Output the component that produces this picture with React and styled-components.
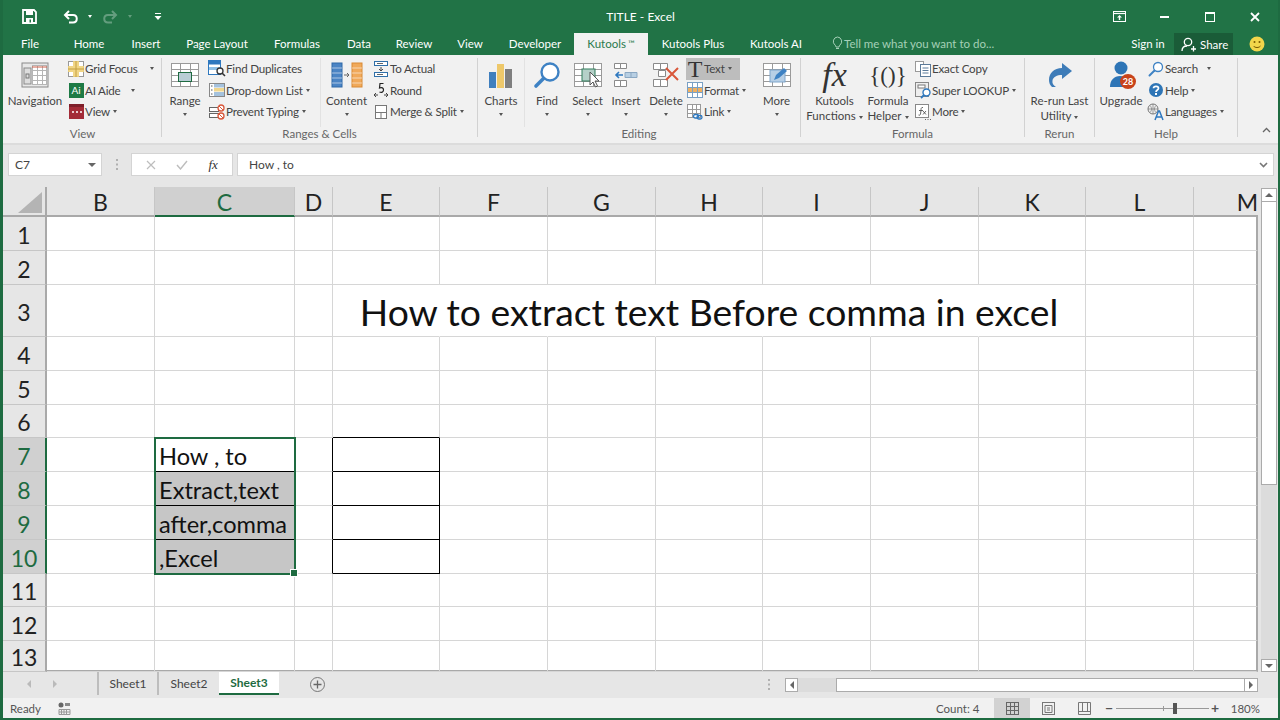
import React from 'react';
import styled, { createGlobalStyle } from 'styled-components';

const GlobalStyle = createGlobalStyle`
  html, body { margin: 0; padding: 0; width: 1280px; height: 720px; overflow: hidden; background: #217346; }
  body { font-family: Lato, "Open Sans", sans-serif; }
  #root { width: 1280px; height: 720px; }
  * { box-sizing: border-box; }
`;

const Window = styled.div`
  width: 1280px;
  height: 720px;
  display: flex;
  flex-direction: column;
  border-left: 3px solid #1e6b41;
  border-right: 2px solid #1e6b41;
  border-bottom: 2px solid #1e6b41;
  background: #e6e6e6;
  overflow: hidden;
`;

/* ---------- title bar + tabs ---------- */
const TitleBar = styled.div`
  height: 33px;
  margin-left: -3px;
  margin-right: -2px;
  padding-right: 3px;
  background: #217346;
  display: flex;
  align-items: center;
  color: #fff;
`;
const QuickBtn = styled.div`
  width: ${(p) => p.$w}px;
  display: flex;
  justify-content: center;
  align-items: center;
  opacity: ${(p) => (p.$faint ? 0.3 : 1)};
`;
const TitleText = styled.div`
  flex: 1;
  text-align: center;
  font-size: 12px;
  margin-left: 4px;
`;
const WinBtn = styled.div`
  width: 45px;
  display: flex;
  justify-content: center;
  align-items: center;
`;
const TabStrip = styled.div`
  height: 22px;
  margin-left: -3px;
  margin-right: -2px;
  background: #217346;
  display: flex;
  align-items: stretch;
  color: #fff;
  font-size: 11.5px;
`;
const Tab = styled.div`
  width: ${(p) => p.$w}px;
  display: flex;
  align-items: center;
  justify-content: center;
  padding-bottom: 2px;
  white-space: nowrap;
  ${(p) => p.$active && 'background:#f1f1f1;'}
  color: ${(p) => (p.$active ? '#2a7a4d' : '#fff')};
  sup { font-size: 9px; margin-left: 2px; line-height: 1; }
`;
const TellMe = styled.div`
  flex: 1;
  display: flex;
  align-items: center;
  gap: 1px;
  padding: 0 0 2px 18px;
  color: #a5d0b7;
`;
const SignIn = styled.div`
  width: 60px;
  display: flex;
  align-items: center;
  justify-content: center;
  padding: 0 0 2px 8px;
`;
const ShareBtn = styled.div`
  width: 59px;
  display: flex;
  align-items: center;
  gap: 3px;
  padding-left: 7px;
  background: #1a5c38;
`;
const Smiley = styled.div`
  width: 47px;
  display: flex;
  align-items: center;
  justify-content: center;
`;

/* ---------- ribbon ---------- */
const Ribbon = styled.div`
  height: 90px;
  background: #f1f1f1;
  border-bottom: 2px solid #dcdcdc;
  display: flex;
  color: #444;
  font-size: 11.5px;
  padding-left: 1px;
  position: relative;
`;
const Group = styled.div`
  width: ${(p) => p.$w}px;
  margin-top: 3px;
  margin-bottom: 6px;
  border-right: 1px solid #d2d2d2;
  display: flex;
  flex-direction: column;
`;
const GroupBody = styled.div`
  flex: 1;
  display: flex;
`;
const GroupLabel = styled.div`
  height: 10px;
  text-align: center;
  line-height: 14px;
  font-size: 11.5px;
  color: #666;
`;
const BigBtn = styled.div`
  width: ${(p) => p.$w}px;
  display: flex;
  flex-direction: column;
  align-items: center;
  line-height: 15px;
  text-align: center;
  white-space: nowrap;
  ${(p) => p.$sep && 'border-right:1px solid #e2e2e2;'}
`;
const BigIcon = styled.div`
  height: 35px;
  padding-bottom: 1px;
  display: flex;
  align-items: center;
  justify-content: center;
`;
const SmallCol = styled.div`
  width: ${(p) => p.$w}px;
  padding-left: ${(p) => p.$left || 0}px;
  ${(p) => p.$sep && 'border-right:1px solid #e2e2e2;'}
`;
const SmallRow = styled.div`
  height: 21.6px;
  display: flex;
  align-items: center;
  white-space: nowrap;
  font-size: 11.6px;
  letter-spacing: -0.2px;
  width: ${(p) => (p.$active ? '54px' : 'auto')};
  background: ${(p) => (p.$active ? '#bdbdbd' : 'transparent')};
`;
const SmallIcon = styled.div`
  width: 18px;
  height: 18px;
  display: flex;
  align-items: center;
  justify-content: center;
  flex: none;
`;
const Caret = styled.span`
  display: inline-block;
  width: 0;
  height: 0;
  border-left: 2.5px solid transparent;
  border-right: 2.5px solid transparent;
  border-top: 3px solid #555;
  margin-left: ${(p) => p.$gap ?? 3}px;
  vertical-align: middle;
`;
const BigCaret = styled(Caret)`
  margin: 5px 0 0;
`;
const CollapseBtn = styled.div`
  position: absolute;
  right: 7px;
  bottom: 8px;
`;
const AiBadge = styled.div`
  width: 15px;
  height: 15px;
  background: #1d7a45;
  color: #fff;
  font-size: 10px;
  line-height: 15px;
  text-align: center;
`;
const SerifGlyph = styled.span`
  font-family: "Liberation Serif", serif;
  font-size: ${(p) => p.$size}px;
  font-style: ${(p) => (p.$italic ? 'italic' : 'normal')};
  color: #333;
  line-height: 1;
  white-space: nowrap;
`;
const UpgradeBadge = styled.div`
  position: absolute;
  right: -3px;
  bottom: 0;
  width: 16px;
  height: 15px;
  border-radius: 50%;
  background: #c8431a;
  color: #fff;
  font-size: 9px;
  font-weight: 700;
  line-height: 15px;
  text-align: center;
`;
const UpgradeWrap = styled.div`
  position: relative;
  width: 24px;
  height: 28px;
`;

/* ---------- formula bar ---------- */
const FormulaBar = styled.div`
  height: 42px;
  display: flex;
  align-items: flex-start;
  padding: 8px 4px 0 5px;
  background: #e6e6e6;
  font-size: 12px;
  color: #444;
`;
const NameBox = styled.div`
  width: 94px;
  height: 23px;
  background: #fff;
  border: 1px solid #d4d4d4;
  display: flex;
  align-items: center;
  justify-content: space-between;
  padding: 0 5px 0 6px;
`;
const Dots = styled.div`
  width: 29px;
  height: 23px;
  display: flex;
  align-items: center;
  justify-content: center;
`;
const FxBox = styled.div`
  width: 102px;
  height: 23px;
  background: #fff;
  border: 1px solid #d4d4d4;
  display: flex;
  align-items: center;
  justify-content: space-around;
  padding: 0 4px;
`;
const FormulaInput = styled.div`
  flex: 1;
  height: 23px;
  margin-left: 4px;
  background: #fff;
  border: 1px solid #d4d4d4;
  display: flex;
  align-items: center;
  justify-content: space-between;
  padding: 0 5px 0 11px;
`;

/* ---------- sheet ---------- */
const Workspace = styled.div`
  height: 485px;
  display: flex;
`;
const Sheet = styled.div`
  width: 1255px;
  display: grid;
  grid-template-columns: 44px 108px 140px 38px 107px 108px 108px 107px 108px 108px 107px 108px 64px;
  grid-template-rows: 30px 34px 34px 52px 34px 34px 33px 34px 34px 34px 34px 33px 34px 31px;
  background: #fff;
  border-bottom: 2px solid #a9a9a9;
`;
const Corner = styled.div`
  background: #e6e6e6;
  border-bottom: 2px solid #a9a9a9;
  border-right: 2px solid #a9a9a9;
  display: flex;
  align-items: flex-end;
  justify-content: flex-end;
  padding: 0 3px 2px 0;
`;
const ColHead = styled.div`
  background: ${(p) => (p.$active ? '#d0d0d0' : '#e6e6e6')};
  color: ${(p) => (p.$active ? '#1e6b41' : '#222')};
  border-right: 1px solid #c6c6c6;
  border-bottom: 2px solid ${(p) => (p.$active ? '#1e6b41' : '#a9a9a9')};
  display: flex;
  align-items: center;
  justify-content: center;
  font-size: 23px;
  padding-top: 1px;
  ${(p) => p.$last && 'border-right:none;justify-content:flex-end;border-bottom-color:#a9a9a9;'}
`;
const RowHead = styled.div`
  grid-column: 1;
  grid-row: ${(p) => p.$r + 1};
  background: ${(p) => (p.$active ? '#d0d0d0' : '#e6e6e6')};
  color: ${(p) => (p.$active ? '#1e6b41' : '#222')};
  border-right: 2px solid ${(p) => (p.$active ? '#1e6b41' : '#a9a9a9')};
  border-bottom: 1px solid #c6c6c6;
  display: flex;
  align-items: center;
  justify-content: center;
  padding-top: 2px;
  font-size: 23px;
`;
const Cell = styled.div`
  grid-column: ${(p) => p.$c + 2};
  grid-row: ${(p) => p.$r + 1};
  background: ${(p) => (p.$fill ? '#c6c6c6' : 'transparent')};
  border-right: 1px solid ${(p) => (p.$hideRight ? 'transparent' : p.$blackRight ? '#000' : '#d6d6d6')};
  border-bottom: 1px solid ${(p) => (p.$blackBottom ? '#000' : '#d6d6d6')};
  display: flex;
  align-items: center;
  padding: 2px 0 0 4px;
  font-size: 23.6px;
  color: #111;
  white-space: nowrap;
  min-width: 0;
  ${(p) => p.$lastCol && 'border-right:2px solid #a9a9a9;'}
`;
const TitleCell = styled(Cell)`
  justify-content: center;
  padding: 2px 0 0;
  font-size: 37.3px;
`;
const Selection = styled.div`
  grid-column: 3;
  grid-row: 8 / 12;
  margin: -1px;
  border: 2px solid #1e6b41;
  position: relative;
  pointer-events: none;
  &::after {
    content: '';
    position: absolute;
    right: -4px;
    bottom: -4px;
    width: 6px;
    height: 6px;
    background: #1e6b41;
    border: 1px solid #fff;
  }
`;
const VScroll = styled.div`
  flex: 1;
  display: flex;
  flex-direction: column;
  padding: 1px 1px 0 3px;
  background: #e6e6e6;
`;
const ScrollBtn = styled.div`
  height: ${(p) => p.$h || 13}px;
  width: ${(p) => p.$w || 'auto'};
  flex: none;
  background: #fff;
  border: 1px solid #ababab;
  display: flex;
  align-items: center;
  justify-content: center;
`;
const VThumb = styled.div`
  height: 283px;
  background: #fff;
  border: 1px solid #ababab;
  border-top: none;
`;
const VTrack = styled.div`
  flex: 1;
  background: #dcdcdc;
`;
const Tri = styled.span`
  width: 0;
  height: 0;
  ${(p) => p.$dir === 'up' && 'border-left:4px solid transparent;border-right:4px solid transparent;border-bottom:4px solid #666;'}
  ${(p) => p.$dir === 'down' && 'border-left:4px solid transparent;border-right:4px solid transparent;border-top:4px solid #666;'}
  ${(p) => p.$dir === 'left' && 'border-top:4px solid transparent;border-bottom:4px solid transparent;border-right:4px solid #666;'}
  ${(p) => p.$dir === 'right' && 'border-top:4px solid transparent;border-bottom:4px solid transparent;border-left:4px solid #666;'}
  opacity: ${(p) => (p.$faint ? 0.35 : 1)};
`;

/* ---------- sheet tabs ---------- */
const SheetBar = styled.div`
  height: 26px;
  display: flex;
  align-items: flex-start;
  background: #e6e6e6;
  font-size: 12px;
  color: #444;
`;
const SheetNav = styled.div`
  width: 94px;
  height: 23px;
  display: flex;
  align-items: center;
  gap: 22px;
  padding-left: 24px;
`;
const SheetTab = styled.div`
  width: ${(p) => p.$w}px;
  height: 23px;
  display: flex;
  align-items: center;
  justify-content: center;
  border-left: ${(p) => (p.$active ? 'none' : '2px solid #bdbdbd')};
  background: ${(p) => (p.$active ? '#fff' : 'transparent')};
  color: ${(p) => (p.$active ? '#1e6b41' : '#444')};
  font-weight: ${(p) => (p.$active ? 700 : 400)};
  ${(p) => p.$active && 'border-bottom:2px solid #1e6b41;'}
`;
const AddSheet = styled.div`
  width: 76px;
  height: 25px;
  display: flex;
  align-items: center;
  justify-content: center;
`;
const SplitDots = styled.div`
  flex: 1;
  height: 25px;
  display: flex;
  align-items: center;
  justify-content: flex-end;
  padding-right: 15px;
`;
const HScroll = styled.div`
  width: 473px;
  height: 14px;
  margin: 6px 20px 0 0;
  display: flex;
`;
const HTrack = styled.div`
  width: 38px;
  background: #dcdcdc;
`;
const HThumb = styled.div`
  flex: 1;
  background: #fff;
  border: 1px solid #ababab;
  border-right: none;
`;

/* ---------- status bar ---------- */
const StatusBar = styled.div`
  height: 20px;
  background: #f1f1f1;
  display: flex;
  align-items: center;
  font-size: 11.5px;
  color: #555;
  padding-left: 7px;
`;
const StatusText = styled.span`
  width: ${(p) => p.$w}px;
  flex: none;
`;
const StatusFill = styled.div`
  flex: 1;
`;
const ViewBtn = styled.div`
  width: 36px;
  height: 20px;
  display: flex;
  align-items: center;
  justify-content: center;
  background: ${(p) => (p.$active ? '#d2d2d2' : 'transparent')};
`;
const ZoomBar = styled.div`
  width: 124px;
  display: flex;
  align-items: center;
  justify-content: space-between;
  padding: 0 7px 0 3px;
  color: #555;
  font-weight: 700;
  font-size: 14px;
  line-height: 1;
`;
const ZoomTrack = styled.div`
  width: 93px;
  height: 1px;
  background: #999;
  position: relative;
`;
const ZoomThumb = styled.div`
  position: absolute;
  left: 57px;
  top: -5px;
  width: 4px;
  height: 11px;
  background: #555;
`;
const ZoomTick = styled.div`
  position: absolute;
  left: 47px;
  top: -2px;
  width: 1px;
  height: 5px;
  background: #999;
`;
const ZoomPct = styled.span`
  width: 34px;
  text-align: right;
  margin-right: 18px;
`;

/* ---------- icons ---------- */
const Svg = ({ s = 16, h, vb, children, ...rest }) => (
  <svg width={s} height={h || s} viewBox={vb || `0 0 ${s} ${h || s}`} fill="none" {...rest}>{children}</svg>
);

const TableLines = ({ x, y, w, h, cols, rows, stroke = '#9a9a9a' }) => (
  <g stroke={stroke} strokeWidth="1">
    <rect x={x + 0.5} y={y + 0.5} width={w - 1} height={h - 1} fill="#fff" />
    {Array.from({ length: cols - 1 }, (_, i) => {
      const lx = Math.round(x + (w * (i + 1)) / cols) + 0.5;
      return <line key={i} x1={lx} x2={lx} y1={y} y2={y + h} />;
    })}
    {Array.from({ length: rows - 1 }, (_, i) => {
      const ly = Math.round(y + (h * (i + 1)) / rows) + 0.5;
      return <line key={i} x1={x} x2={x + w} y1={ly} y2={ly} />;
    })}
  </g>
);

const NavIcon = () => (
  <Svg s={28} h={26}>
    <rect x="1" y="1" width="26" height="24" fill="#e8e8e8" stroke="#8a8a8a" />
    <TableLines x={11} y={3} w={15} h={20} cols={3} rows={4} stroke="#b5b5b5" />
    <line x1="11" x2="26" y1="5" y2="5" stroke="#d0604a" />
    <rect x="3" y="6" width="7" height="16" fill="#ddd" stroke="#8a8a8a" />
    <rect x="5" y="12" width="3" height="4" stroke="#777" />
  </Svg>
);
const RangeIcon = () => (
  <Svg s={28} h={25}>
    <TableLines x={0} y={0} w={28} h={24} cols={3} rows={4} />
    <rect x="7.5" y="9.5" width="13" height="9" fill="#b9cdd5" stroke="#1e6b41" />
  </Svg>
);
const ContentIcon = () => (
  <Svg s={32} h={26}>
    <rect x="1" y="1" width="10" height="24" fill="#4b84c4" stroke="#2e68a8" />
    <rect x="21" y="1" width="10" height="24" fill="#f0a95a" stroke="#d98a35" />
    <g stroke="#fff" strokeOpacity=".55"><path d="M1 6h10M1 11h10M1 16h10M1 21h10M21 6h10M21 11h10M21 16h10M21 21h10" /></g>
    <path d="M13 13h5m-2-2 2 2-2 2" stroke="#666" />
  </Svg>
);
const ChartsIcon = () => (
  <Svg s={24} h={25}>
    <rect x="0" y="9" width="7" height="16" fill="#3f7fbe" />
    <rect x="8" y="1" width="7" height="24" fill="#eec86a" />
    <rect x="16" y="6" width="7" height="19" fill="#7f7f7f" />
  </Svg>
);
const FindIcon = () => (
  <Svg s={28} h={28}>
    <circle cx="17" cy="11" r="8.5" stroke="#3e82c4" strokeWidth="2.4" fill="#fff" />
    <path d="M10.5 17.5 3 25" stroke="#3e82c4" strokeWidth="3.6" strokeLinecap="round" />
  </Svg>
);
const SelectIcon = () => (
  <Svg s={28} h={26}>
    <TableLines x={0} y={1} w={28} h={24} cols={3} rows={4} />
    <rect x="8" y="7" width="13" height="12" fill="#b5d0c8" stroke="#2f7d5b" />
    <path d="M16 10v13l3-3 2.5 5 2-1-2.5-5h4z" fill="#fff" stroke="#555" />
  </Svg>
);
const InsertIcon = () => (
  <Svg s={26} h={26}>
    <g stroke="#8a8a8a" fill="#fff">
      <path d="M1.5 1.5h6v5h-6zM7.5 1.5h6v5h-6zM1.5 18.5h6v6h-6zM7.5 18.5h6v6h-6z" />
    </g>
    <path d="M12 10.5h12v5H12z" fill="#b8cfe3" stroke="#8aa7c2" />
    <path d="M18 10.5v5" stroke="#8aa7c2" />
    <path d="M10 13H3m3-3-3 3 3 3" stroke="#2e78bf" strokeWidth="1.6" />
  </Svg>
);
const DeleteIcon = () => (
  <Svg s={28} h={26}>
    <g stroke="#8a8a8a" fill="#fff">
      <path d="M1.5 1.5h7v6h-7zM8.5 1.5h7v6h-7zM6.5 8.5h7v6h-7zM1.5 17.5h7v7h-7zM8.5 17.5h7v7h-7z" />
    </g>
    <path d="M14 6l12 12M26 6 14 18" stroke="#d9573a" strokeWidth="2" />
  </Svg>
);
const MoreIcon = () => (
  <Svg s={28} h={25}>
    <TableLines x={0} y={0} w={28} h={24} cols={3} rows={4} />
    <rect x="7" y="7" width="15" height="12" fill="#b7cfe6" stroke="#7ea6cc" />
    <path d="M11 17l2-5 8-7 3 3-8 7z" fill="#3e82c4" />
  </Svg>
);
const RerunIcon = () => (
  <Svg s={26} h={26}>
    <path d="M25 9 15 1v5C7 6 2 11 2 18c0 3 1 5 3 7h4c-3-2-4-4-3.500-6.500C6 15 10 13 15 13v4z" fill="#3e7cb8" />
  </Svg>
);
const PersonIcon = () => (
  <Svg s={22} h={26}>
    <circle cx="11" cy="7" r="6.5" fill="#2e75b6" />
    <path d="M0 26c0-7 4-11 10-11 3 0 5 1 6 2v9z" fill="#2e75b6" />
  </Svg>
);

const GridFocusIcon = () => (
  <Svg s={16}>
    <rect x=".5" y=".5" width="15" height="15" fill="#fff" stroke="#999" />
    <path d="M5 0h6v16H5zM0 5h16v6H0z" fill="#f0d27a" opacity=".9" />
    <path d="M8 0v16M0 8h16" stroke="#c4a040" />
  </Svg>
);
const ViewSmallIcon = () => (
  <Svg s={15}>
    <rect width="15" height="15" fill="#a32b37" />
    <rect y="0" width="15" height="3" fill="#7e1f2a" />
    <path d="M3 8h2M7 8h2M11 8h2" stroke="#fff" strokeWidth="1.500" />
  </Svg>
);
const FindDupIcon = () => (
  <Svg s={18}>
    <rect x=".5" y=".5" width="12" height="14" fill="#fff" stroke="#2e78bf" />
    <rect x=".5" y=".5" width="12" height="4" fill="#2e78bf" />
    <rect x="1" y="7" width="11" height="3" fill="#8fc0e6" />
    <circle cx="12" cy="11" r="3" fill="#fff" stroke="#333" strokeWidth="1.300" />
    <path d="m14 13 3 3" stroke="#333" strokeWidth="1.600" />
  </Svg>
);
const DropListIcon = () => (
  <Svg s={16}>
    <rect x=".5" y="1.500" width="15" height="13" fill="#fff" stroke="#888" />
    <rect x="5" y="2" width="10" height="3.500" fill="#a5c2dd" />
    <rect x="5" y="6" width="10" height="3.500" fill="#efd68e" />
    <rect x="5" y="10" width="10" height="4" fill="#a5c2dd" />
    <path d="M2 4h1.500M2 8h1.500M2 12h1.500" stroke="#555" />
  </Svg>
);
const PreventIcon = () => (
  <Svg s={16}>
    <rect x=".5" y="3.500" width="9" height="4" fill="#fff" stroke="#666" />
    <rect x=".5" y="9.500" width="9" height="4" fill="#fff" stroke="#666" />
    <circle cx="12" cy="4" r="3" fill="#fff" stroke="#d9573a" strokeWidth="1.300" />
    <circle cx="12" cy="12" r="3" fill="#fff" stroke="#d9573a" strokeWidth="1.300" />
    <path d="m10 2 4 4M10 10l4 4" stroke="#d9573a" />
  </Svg>
);
const ToActualIcon = () => (
  <Svg s={16}>
    <rect x="1.500" y=".5" width="13" height="4" fill="#fff" stroke="#2f6fa8" />
    <rect x="1.500" y="11.500" width="13" height="4" fill="#fff" stroke="#2f6fa8" />
    <path d="M4 2.500h6M4 13.500h6" stroke="#666" />
    <path d="M8 6v3m-2-1 2 2 2-2" stroke="#444" />
  </Svg>
);
const RoundIcon = () => (
  <Svg s={16}>
    <path d="M1 13h4m-2-2-2 2 2 2M11 13h4m-2-2 2 2-2 2" stroke="#444" />
    <path d="M10.500 1.500H7L6.500 6c2.500-1 4 0 4 2s-2 3-4 2" stroke="#222" strokeWidth="1.200" />
  </Svg>
);
const MergeIcon = () => (
  <Svg s={16}>
    <rect x="2.500" y="1.500" width="11" height="13" fill="#fff" stroke="#777" />
    <path d="M2 8.500h12M8 9v6" stroke="#777" />
  </Svg>
);
const FormatIcon = () => (
  <Svg s={16}>
    <rect x=".5" y=".5" width="15" height="15" fill="#fff" stroke="#7aa0c4" />
    <rect x="1" y="6" width="14" height="4" fill="#f0b060" />
    <path d="M0 5.500h16M0 10.500h16M5.500 0v16M10.500 0v16" stroke="#7aa0c4" />
  </Svg>
);
const LinkIcon = () => (
  <Svg s={16}>
    <TableLines x={0} y={0} w={14} h={14} cols={3} rows={3} />
    <rect x="6.500" y="10.500" width="5" height="3.500" rx="1.700" stroke="#2e78bf" strokeWidth="1.300" fill="#fff" />
    <rect x="10" y="11.500" width="5" height="3.500" rx="1.700" stroke="#2e78bf" strokeWidth="1.300" />
  </Svg>
);
const ExactCopyIcon = () => (
  <Svg s={16}>
    <rect x=".5" y=".5" width="8" height="10" fill="#fff" stroke="#9a9a9a" />
    <rect x="5.500" y="3.500" width="10" height="12" fill="#fff" stroke="#5b7a99" />
    <path d="M7.500 7h6M7.500 9.500h6M7.500 12h6" stroke="#5b7a99" />
  </Svg>
);
const LookupIcon = () => (
  <Svg s={17}>
    <rect x=".5" y=".5" width="13" height="14" fill="#eee" stroke="#888" />
    <rect x="3" y="3" width="7" height="3" fill="#fff" stroke="#777" />
    <circle cx="11.500" cy="10.500" r="3.500" fill="#fff" stroke="#2e78bf" strokeWidth="1.400" />
    <path d="m9 13-3 3" stroke="#2e78bf" strokeWidth="1.800" />
  </Svg>
);
const SearchSmallIcon = () => (
  <Svg s={16}>
    <circle cx="10" cy="6" r="4.500" fill="#fff" stroke="#3e82c4" strokeWidth="1.300" />
    <path d="m6.500 9.500-5 5" stroke="#3e82c4" strokeWidth="2" strokeLinecap="round" />
  </Svg>
);
const HelpIcon = () => (
  <Svg s={16}>
    <circle cx="8" cy="8" r="7" fill="#2e75b6" />
    <path d="M5.500 6.200C5.700 3.800 10.500 3.800 10.500 6.300 10.500 8 8 8 8 10" stroke="#fff" strokeWidth="1.700" />
    <rect x="7" y="11" width="2" height="2" fill="#fff" />
  </Svg>
);
const LangIcon = () => (
  <Svg s={18}>
    <circle cx="6" cy="6" r="5" stroke="#777" />
    <path d="M1 6h10M6 1v10M3 2.500c2 2 2 5 0 7M9 2.500c-2 2-2 5 0 7" stroke="#777" strokeWidth=".7" />
    <path d="M8 17l3.500-9h1l3.500 9m-6.500-3h5" stroke="#2e78bf" strokeWidth="1.500" />
  </Svg>
);
const MoreFxIcon = () => (
  <Svg s={16}>
    <rect x=".5" y=".5" width="13" height="13" fill="#fff" stroke="#888" />
    <path d="M8 3.500C6 3 6 5 6 6.500L5.500 10C5 11.500 4 11.500 3.500 11M4 6.500h4M8 7l3 3.500M11 7l-3 3.500" stroke="#444" strokeWidth=".8" />
    <path d="M10 15.500h1M12.500 15.500h1M15 15.500h1" stroke="#666" />
  </Svg>
);

const SaveIcon = () => (
  <Svg s={15}>
    <path d="M1 1h11l2 2v11H1z" stroke="#fff" strokeWidth="1.800" />
    <rect x="4" y="1.500" width="7" height="4.500" fill="#fff" />
    <rect x="4" y="9" width="7" height="5" fill="#fff" />
    <rect x="7.500" y="10.500" width="1.500" height="3" fill="#217346" />
  </Svg>
);
const UndoIcon = () => (
  <Svg s={16}>
    <path d="M6 2 2 6l4 4" stroke="#fff" strokeWidth="2" />
    <path d="M2.500 6H10c5 0 5 7.500 0 7.500H6" stroke="#fff" strokeWidth="2" />
  </Svg>
);
const RedoIcon = () => (
  <Svg s={16}>
    <path d="m10 2 4 4-4 4" stroke="#fff" strokeWidth="2" />
    <path d="M13.500 6H6c-5 0-5 7.500 0 7.500h4" stroke="#fff" strokeWidth="2" />
  </Svg>
);
const WhiteCaret = styled(Caret)`
  border-top-color: #fff;
  margin: 0;
`;
const CustomizeIcon = () => (
  <Svg s={8} h={9}>
    <path d="M1 1.500h6" stroke="#fff" />
    <path d="M0.500 4h7L4 8z" fill="#fff" />
  </Svg>
);
const RibbonDisplayIcon = () => (
  <Svg s={13} h={11}>
    <rect x=".5" y=".5" width="12" height="10" stroke="#fff" />
    <path d="M0 2.500h13" stroke="#fff" strokeWidth="1.200" />
    <path d="M6.500 4 4 6.500h1.800V9h1.400V6.500H9z" fill="#fff" />
  </Svg>
);
const MinIcon = () => (<Svg s={10} h={4}><rect y="1" width="9" height="2" fill="#fff" /></Svg>);
const MaxIcon = () => (
  <Svg s={10} h={10}><rect x=".5" y=".5" width="9" height="9" stroke="#fff" /><rect y="0" width="10" height="2" fill="#fff" /></Svg>
);
const CloseIcon = () => (
  <Svg s={10} h={10}><path d="m1 1 8 8M9 1 1 9" stroke="#fff" strokeWidth="1.800" /></Svg>
);
const BulbIcon = () => (
  <Svg s={11} h={14}>
    <path d="M5.500 1a4.500 4.500 0 0 0-2.500 8c.6.500.9 1.200 1 2h3c.1-.8.4-1.500 1-2a4.500 4.500 0 0 0-2.500-8z" stroke="#a5d0b7" />
    <path d="M4 12.500h3" stroke="#a5d0b7" />
  </Svg>
);
const ShareIcon = () => (
  <Svg s={16} h={15}>
    <circle cx="7" cy="5" r="3.700" stroke="#fff" strokeWidth="1.300" />
    <path d="M1 14c0-3 2-5 5-5M12.500 9v5.500M10 12h5" stroke="#fff" strokeWidth="1.300" />
  </Svg>
);
const SmileyIcon = () => (
  <Svg s={16}>
    <circle cx="8" cy="8" r="7.500" fill="#f2d64b" />
    <circle cx="5.500" cy="6" r="1" fill="#7a5a00" />
    <circle cx="10.500" cy="6" r="1" fill="#7a5a00" />
    <path d="M4.500 10c1.500 2 5.500 2 7 0" stroke="#7a5a00" />
  </Svg>
);
const CollapseIcon = () => (<Svg s={9} h={6}><path d="m1 5 3.500-3.500L8 5" stroke="#666" strokeWidth="1.300" /></Svg>);
const ChevronIcon = () => (<Svg s={9} h={6}><path d="m1 1 3.500 3.500L8 1" stroke="#777" strokeWidth="1.600" /></Svg>);
const DotsIcon = () => (
  <Svg s={2} h={11}><path d="M0 0h2v2H0zM0 4.500h2v2H0zM0 9h2v2H0z" fill="#b0b0b0" /></Svg>
);
const CrossIcon = () => (<Svg s={10} h={10}><path d="m1 1 8 8M9 1 1 9" stroke="#bdbdbd" strokeWidth="1.200" /></Svg>);
const CheckIcon = () => (<Svg s={12} h={10}><path d="m1 5 3.500 4L11 1" stroke="#bdbdbd" strokeWidth="1.400" /></Svg>);
const CornerTri = () => (
  <Svg s={24} h={21}><path d="M24 0v21H0z" fill="#b4b4b4" /></Svg>
);
const PlusCircle = () => (
  <Svg s={15}>
    <circle cx="7.500" cy="7.500" r="7" stroke="#777" />
    <path d="M7.500 3.500v8M3.500 7.500h8" stroke="#666" strokeWidth="1.300" />
  </Svg>
);
const MacroIcon = () => (
  <Svg s={13}>
    <circle cx="3" cy="3" r="2.500" fill="#666" />
    <path d="M7 1h5v3H7z" fill="#888" />
    <path d="M1 7.500h11v5H1z" stroke="#999" />
    <path d="M3.500 7v6M6 7v6M8.500 7v6M1 10h11" stroke="#999" />
  </Svg>
);
const NormalViewIcon = () => (
  <Svg s={13}><rect x=".5" y=".5" width="12" height="12" stroke="#666" /><path d="M4.500 0v13M8.500 0v13M0 4.500h13M0 8.500h13" stroke="#666" /></Svg>
);
const LayoutViewIcon = () => (
  <Svg s={13}><rect x=".5" y=".5" width="12" height="12" stroke="#777" /><path d="M3 3.500h7v7H3zM5 6h3M5 8h3" stroke="#777" /></Svg>
);
const BreakViewIcon = () => (
  <Svg s={13}><path d="M.5 12.500V.5h12v12zM.5 9.500h12M4.500.5V9.500M9.500.5V9.500" stroke="#777" /></Svg>
);

const columns = ['B', 'C', 'D', 'E', 'F', 'G', 'H', 'I', 'J', 'K', 'L', 'M'];
const rows = [1, 2, 3, 4, 5, 6, 7, 8, 9, 10, 11, 12, 13];
const cellText = {
  C7: 'How , to',
  C8: 'Extract,text',
  C9: 'after,comma',
  C10: ',Excel',
};

const cellProps = (col, idx, row) => ({
  $c: idx,
  $r: row,
  $fill: col === 'C' && row >= 8 && row <= 10,
  $blackRight: (col === 'D' || col === 'E') && row >= 7 && row <= 10,
  $blackBottom: (col === 'E' && row >= 6 && row <= 10) || (col === 'C' && row >= 7 && row <= 9),
  $hideRight: row === 3 && 'EFGHIJ'.includes(col),
  $lastCol: col === 'M',
});

const Small = ({ icon, label, gap, noCaret, active }) => (
  <SmallRow $active={active}>
    <SmallIcon>{icon}</SmallIcon>
    <span>{label}</span>
    {!noCaret && <Caret $gap={gap} />}
  </SmallRow>
);

const Big = ({ w, icon, label, caret, sep }) => (
  <BigBtn $w={w} $sep={sep}>
    <BigIcon>{icon}</BigIcon>
    {label}
    {caret && <BigCaret />}
  </BigBtn>
);

const App = () => (
  <>
    <GlobalStyle />
    <Window>
      <TitleBar>
        <QuickBtn $w={58}><SaveIcon /></QuickBtn>
        <QuickBtn $w={26}><UndoIcon /></QuickBtn>
        <QuickBtn $w={12}><WhiteCaret /></QuickBtn>
        <QuickBtn $w={28} $faint><RedoIcon /></QuickBtn>
        <QuickBtn $w={12} $faint><WhiteCaret /></QuickBtn>
        <QuickBtn $w={44}><CustomizeIcon /></QuickBtn>
        <TitleText>TITLE - Excel</TitleText>
        <WinBtn><RibbonDisplayIcon /></WinBtn>
        <WinBtn><MinIcon /></WinBtn>
        <WinBtn><MaxIcon /></WinBtn>
        <WinBtn><CloseIcon /></WinBtn>
      </TitleBar>
      <TabStrip>
        <Tab $w={60}>File</Tab>
        <Tab $w={58}>Home</Tab>
        <Tab $w={56}>Insert</Tab>
        <Tab $w={86}>Page Layout</Tab>
        <Tab $w={74}>Formulas</Tab>
        <Tab $w={50}>Data</Tab>
        <Tab $w={60}>Review</Tab>
        <Tab $w={52}>View</Tab>
        <Tab $w={78}>Developer</Tab>
        <Tab $w={74} $active>Kutools<sup>™</sup></Tab>
        <Tab $w={90}>Kutools Plus</Tab>
        <Tab $w={76}>Kutools AI</Tab>
        <TellMe><BulbIcon />Tell me what you want to do...</TellMe>
        <SignIn>Sign in</SignIn>
        <ShareBtn><ShareIcon />Share</ShareBtn>
        <Smiley><SmileyIcon /></Smiley>
      </TabStrip>

      <Ribbon>
        <Group $w={158}>
          <GroupBody>
            <Big w={62} icon={<NavIcon />} label="Navigation" />
            <SmallCol $left={1}>
              <Small icon={<GridFocusIcon />} label="Grid Focus" gap={12} />
              <Small icon={<AiBadge>Ai</AiBadge>} label="AI Aide" gap={10} />
              <Small icon={<ViewSmallIcon />} label="View" />
            </SmallCol>
          </GroupBody>
          <GroupLabel>View</GroupLabel>
        </Group>
        <Group $w={316}>
          <GroupBody>
            <Big w={46} icon={<RangeIcon />} label="Range" caret />
            <SmallCol $w={113} $sep>
              <Small icon={<FindDupIcon />} label="Find Duplicates" noCaret />
              <Small icon={<DropListIcon />} label="Drop-down List" />
              <Small icon={<PreventIcon />} label="Prevent Typing" />
            </SmallCol>
            <Big w={51} icon={<ContentIcon />} label="Content" caret />
            <SmallCol>
              <Small icon={<ToActualIcon />} label="To Actual" noCaret />
              <Small icon={<RoundIcon />} label="Round" noCaret />
              <Small icon={<MergeIcon />} label="Merge & Split" />
            </SmallCol>
          </GroupBody>
          <GroupLabel>Ranges &amp; Cells</GroupLabel>
        </Group>
        <Group $w={323}>
          <GroupBody>
            <Big w={47} sep icon={<ChartsIcon />} label="Charts" caret />
            <Big w={44} icon={<FindIcon />} label="Find" caret />
            <Big w={37} icon={<SelectIcon />} label="Select" caret />
            <Big w={40} icon={<InsertIcon />} label="Insert" caret />
            <Big w={40} icon={<DeleteIcon />} label="Delete" caret />
            <SmallCol $w={68}>
              <Small active icon={<SerifGlyph $size={24}>T</SerifGlyph>} label="Text" />
              <Small icon={<FormatIcon />} label="Format" />
              <Small icon={<LinkIcon />} label="Link" />
            </SmallCol>
            <Big w={45} icon={<MoreIcon />} label="More" caret />
          </GroupBody>
          <GroupLabel>Editing</GroupLabel>
        </Group>
        <Group $w={224}>
          <GroupBody>
            <Big w={67} icon={<SerifGlyph $size={34} $italic>fx</SerifGlyph>} label={<span>Kutools<br />Functions<Caret /></span>} />
            <Big w={40} icon={<SerifGlyph $size={23}>{'{()}'}</SerifGlyph>} label={<span>Formula<br />Helper<Caret /></span>} />
            <SmallCol $left={6}>
              <Small icon={<ExactCopyIcon />} label="Exact Copy" noCaret />
              <Small icon={<LookupIcon />} label="Super LOOKUP" />
              <Small icon={<MoreFxIcon />} label="More" />
            </SmallCol>
          </GroupBody>
          <GroupLabel>Formula</GroupLabel>
        </Group>
        <Group $w={70}>
          <GroupBody>
            <Big w={69} icon={<RerunIcon />} label={<span>Re-run Last<br />Utility<Caret /></span>} />
          </GroupBody>
          <GroupLabel>Rerun</GroupLabel>
        </Group>
        <Group $w={143}>
          <GroupBody>
            <Big w={52} icon={<UpgradeWrap><PersonIcon /><UpgradeBadge>28</UpgradeBadge></UpgradeWrap>} label="Upgrade" />
            <SmallCol>
              <Small icon={<SearchSmallIcon />} label="Search" gap={9} />
              <Small icon={<HelpIcon />} label="Help" />
              <Small icon={<LangIcon />} label="Languages" />
            </SmallCol>
          </GroupBody>
          <GroupLabel>Help</GroupLabel>
        </Group>
        <CollapseBtn><CollapseIcon /></CollapseBtn>
      </Ribbon>

      <FormulaBar>
        <NameBox>C7<Tri $dir="down" /></NameBox>
        <Dots><DotsIcon /></Dots>
        <FxBox>
          <CrossIcon />
          <CheckIcon />
          <SerifGlyph $size={13} $italic>fx</SerifGlyph>
        </FxBox>
        <FormulaInput>How , to<ChevronIcon /></FormulaInput>
      </FormulaBar>

      <Workspace>
        <Sheet>
          <Corner><CornerTri /></Corner>
          {columns.map((c) => (
            <ColHead key={c} $active={c === 'C'} $last={c === 'M'}>{c}</ColHead>
          ))}
          {rows.map((r) => (
            <React.Fragment key={r}>
              <RowHead $r={r} $active={r >= 7 && r <= 10}>{r}</RowHead>
              {columns.map((c, i) =>
                r === 3 && c === 'H' ? (
                  <TitleCell key={c} {...cellProps(c, i, r)}>How to extract text Before comma in excel</TitleCell>
                ) : (
                  <Cell key={c} {...cellProps(c, i, r)}>{cellText[`${c}${r}`]}</Cell>
                )
              )}
            </React.Fragment>
          ))}
          <Selection />
        </Sheet>
        <VScroll>
          <ScrollBtn $h={14}><Tri $dir="up" /></ScrollBtn>
          <VThumb />
          <VTrack />
          <ScrollBtn $h={13}><Tri $dir="down" /></ScrollBtn>
        </VScroll>
      </Workspace>

      <SheetBar>
        <SheetNav><Tri $dir="left" $faint /><Tri $dir="right" $faint /></SheetNav>
        <SheetTab $w={60}>Sheet1</SheetTab>
        <SheetTab $w={62}>Sheet2</SheetTab>
        <SheetTab $w={60} $active>Sheet3</SheetTab>
        <AddSheet><PlusCircle /></AddSheet>
        <SplitDots><DotsIcon /></SplitDots>
        <HScroll>
          <ScrollBtn $h={14} $w="13px"><Tri $dir="left" /></ScrollBtn>
          <HTrack />
          <HThumb />
          <ScrollBtn $h={14} $w="14px"><Tri $dir="right" /></ScrollBtn>
        </HScroll>
      </SheetBar>

      <StatusBar>
        <StatusText $w={48}>Ready</StatusText>
        <MacroIcon />
        <StatusFill />
        <StatusText $w={58}>Count: 4</StatusText>
        <ViewBtn $active><NormalViewIcon /></ViewBtn>
        <ViewBtn><LayoutViewIcon /></ViewBtn>
        <ViewBtn><BreakViewIcon /></ViewBtn>
        <ZoomBar>
          −
          <ZoomTrack><ZoomTick /><ZoomThumb /></ZoomTrack>
          +
        </ZoomBar>
        <ZoomPct>180%</ZoomPct>
      </StatusBar>
    </Window>
  </>
);

export default App;
